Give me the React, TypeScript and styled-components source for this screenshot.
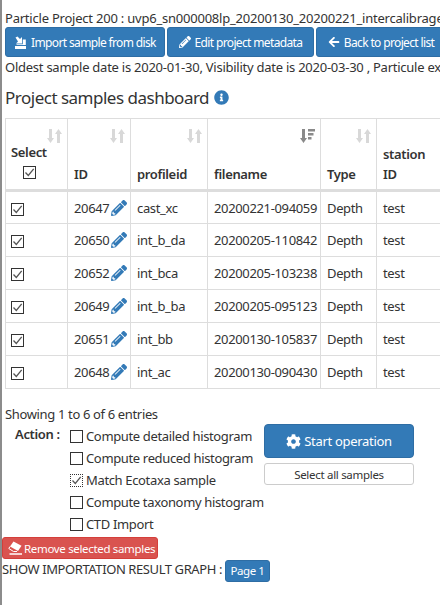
import React from 'react';
import styled, { createGlobalStyle } from 'styled-components';
import { FaArrowLeft, FaCog, FaInfoCircle, FaPencilAlt } from 'react-icons/fa';

const GlobalStyle = createGlobalStyle`
  html, body {
    margin: 0;
    padding: 0;
    background: #fff;
  }

  body {
    font-family: "Noto Sans", "Open Sans", sans-serif;
    font-size: 13px;
    letter-spacing: -0.35px;
    color: #333;
  }

  svg {
    flex: none;
  }
`;

const Page = styled.div`
  position: relative;
  width: 440px;
  height: 605px;
  overflow: hidden;
  border-left: 2px solid #8c8c8c;
  box-sizing: border-box;
`;

const Corner = styled.div`
  position: absolute;
  left: -2px;
  top: 0;
  width: 2px;
  height: 10px;
  background: #222;
`;

const Content = styled.div`
  padding: 9px 0 0 3px;
`;

const Line = styled.div<{ $ls: number; $mt?: number }>`
  height: 18px;
  margin-top: ${p => p.$mt || 0}px;
  line-height: 18px;
  letter-spacing: ${p => p.$ls}px;
  white-space: nowrap;
`;

const Toolbar = styled.div`
  display: flex;
  gap: 2px;
  height: 30px;
  white-space: nowrap;
`;

const ToolButton = styled.button<{ $w: number; $mr?: number }>`
  flex: none;
  display: flex;
  align-items: center;
  justify-content: center;
  gap: 4px;
  width: ${p => p.$w}px;
  margin-right: ${p => p.$mr || 0}px;
  padding: 0;
  border: 1px solid #2e6da4;
  border-radius: 3px;
  background: #337ab7;
  color: #fff;
  font: inherit;
  font-size: 12px;
  letter-spacing: -0.64px;
`;

const Heading = styled.h2`
  display: flex;
  align-items: center;
  gap: 5px;
  height: 26px;
  margin: 8px 0 8px;
  font-size: 17px;
  font-weight: 400;
  letter-spacing: -0.5px;
  color: #333;

  svg {
    color: #337ab7;
  }
`;

const Table = styled.table`
  border-collapse: collapse;
  table-layout: fixed;
  width: 499px;
`;

const HeadCell = styled.th<{ $w: number }>`
  position: relative;
  width: ${p => p.$w}px;
  height: 72px;
  box-sizing: border-box;
  padding: 0 6px 5px;
  border: 1px solid #ddd;
  border-bottom: 3px solid #ddd;
  vertical-align: bottom;
  text-align: left;
  font-weight: 600;
  line-height: 20px;
`;

const SelectHead = styled.div`
  margin: 0 0 3px -1px;
`;

const SelectBoxRow = styled.div`
  margin-left: 12px;
  margin-top: 3px;
  line-height: 13px;
  height: 16px;
`;

const SortMark = styled.svg<{ $on?: boolean }>`
  position: absolute;
  top: 10px;
  right: 5px;
  width: 15px;
  height: 14px;
  color: ${p => (p.$on ? '#8a8a8a' : '#d8d8d8')};
`;

const Cell = styled.td`
  height: 33px;
  box-sizing: border-box;
  padding: 0 6px;
  border: 1px solid #ddd;
  white-space: nowrap;
`;

const IdWrap = styled.div`
  display: flex;
  align-items: center;
  gap: 2px;

  svg {
    color: #337ab7;
  }
`;

const Box = styled.span<{ $focus?: boolean; $shift?: number }>`
  display: inline-flex;
  align-items: center;
  justify-content: center;
  flex: none;
  box-sizing: border-box;
  width: 13px;
  height: 13px;
  margin-left: ${p => p.$shift || 0}px;
  border: 1px ${p => (p.$focus ? 'dotted' : 'solid')} #333;
  background: #fff;
  vertical-align: middle;
`;

const Summary = styled.div`
  height: 18px;
  line-height: 18px;
  margin-top: 16px;
`;

const ActionArea = styled.div`
  display: flex;
  margin-left: 10px;
`;

const ActionLabel = styled.div`
  width: 55px;
  flex: none;
  padding-top: 2px;
  font-weight: 600;
  line-height: 18px;
`;

const Options = styled.div`
  width: 194px;
  flex: none;
  padding-top: 2px;
`;

const Option = styled.label`
  display: flex;
  align-items: center;
  gap: 3px;
  height: 22px;
  white-space: nowrap;
`;

const Side = styled.div`
  display: flex;
  flex-direction: column;
  gap: 5px;
  width: 150px;
  padding-top: 1px;
`;

const StartButton = styled.button`
  display: flex;
  align-items: center;
  justify-content: center;
  gap: 3px;
  height: 34px;
  padding: 0;
  border: 1px solid #2e6da4;
  border-radius: 4px;
  background: #337ab7;
  color: #fff;
  font: inherit;
  font-size: 13px;
  letter-spacing: -0.3px;
`;

const SelectAll = styled.button`
  height: 22px;
  padding: 0;
  border: 1px solid #ccc;
  border-radius: 3px;
  background: #fff;
  color: #333;
  font: inherit;
  font-size: 11.5px;
  letter-spacing: -0.3px;
`;

const Footer = styled.div`
  margin-left: -3px;
`;

const RemoveButton = styled.button`
  display: flex;
  align-items: center;
  gap: 1px;
  width: 156px;
  height: 22px;
  margin-top: 2px;
  padding: 0 0 0 5px;
  border: 1px solid #d43f3a;
  border-radius: 3px;
  background: #d9534f;
  color: #fff;
  font: inherit;
  font-size: 11.5px;
  letter-spacing: -0.33px;
  white-space: nowrap;
`;

const GraphRow = styled.div`
  display: flex;
  align-items: flex-start;
  gap: 3px;
  white-space: nowrap;
  line-height: 20px;
  letter-spacing: -0.41px;
`;

const PageButton = styled.button`
  width: 45px;
  height: 22px;
  margin-top: 1px;
  padding: 0;
  border: 1px solid #2e6da4;
  border-radius: 3px;
  background: #337ab7;
  color: #fff;
  font: inherit;
  font-size: 11.5px;
  letter-spacing: -0.4px;
`;

const Tick = () => (
  <svg width="11" height="11" viewBox="0 0 11 11" fill="none">
    <path d="M1.5 5.5 L4.3 8.5 L9.7 1.8" stroke="#555" strokeWidth="1.3" />
  </svg>
);

const Sort = ({ on }: { on?: boolean }) => (
  <SortMark $on={on} viewBox="0 0 15 14" fill="currentColor">
    <path d="M2 0h3v9h2l-3.5 5L0 9h2z" />
    {on ? (
      <path d="M8 0h7v2.500H8zM8 4h5.500v2.500H8zM8 8h3.500v2.500H8z" />
    ) : (
      <path d="M10 14h3V5h2l-3.500-5L8 5h2z" />
    )}
  </SortMark>
);

const ImportIcon = () => (
  <svg width="13" height="13" viewBox="0 0 13 13" fill="#fff">
    <path d="M1 10h11v3H1z" />
    <path d="M1.500 1.500 L3.500 0.500 L6 3 L8 1 L8 7.500 L2 7.500 L4 5.500 Z" />
    <path d="M8.800 3.500h3v5.500H2.500V8.200h6.300z" />
  </svg>
);

const EraserIcon = () => (
  <svg width="15" height="14" viewBox="0 0 15 14" fill="none">
    <path d="M5.500 0.500 L13.500 4.800 L10 10 L2 5.500 Z" fill="#fff" />
    <path d="M1.500 13 H14" stroke="#fff" strokeWidth="1.500" />
    <path d="M2 5.500 L0.800 7.500 L5.500 10.500 H9" stroke="#fff" strokeWidth="1" />
  </svg>
);

const rows = [
  ['20647', 'cast_xc', '20200221-094059'],
  ['20650', 'int_b_da', '20200205-110842'],
  ['20652', 'int_bca', '20200205-103238'],
  ['20649', 'int_b_ba', '20200205-095123'],
  ['20651', 'int_bb', '20200130-105837'],
  ['20648', 'int_ac', '20200130-090430'],
];

const actions = [
  'Compute detailed histogram',
  'Compute reduced histogram',
  'Match Ecotaxa sample',
  'Compute taxonomy histogram',
  'CTD Import',
];

export default function App() {
  return (
    <>
      <GlobalStyle />
      <Page>
        <Corner />
        <Content>
          <Line $ls={-0.22}>Particle Project 200 : uvp6_sn000008lp_20200130_20200221_intercalibrage</Line>
          <Toolbar>
            <ToolButton $w={160}>
              <ImportIcon /> Import sample from disk
            </ToolButton>
            <ToolButton $w={147}>
              <FaPencilAlt size={12} /> Edit project metadata
            </ToolButton>
            <ToolButton $w={130} $mr={-10}>
              <FaArrowLeft size={12} /> Back to project list
            </ToolButton>
          </Toolbar>
          <Line $ls={-0.25} $mt={1}>
            Oldest sample date is 2020-01-30, Visibility date is 2020-03-30 , Particule export
          </Line>
          <Heading>
            Project samples dashboard <FaInfoCircle size={15} />
          </Heading>
          <Table>
            <thead>
              <tr>
                <HeadCell $w={62}>
                  <Sort />
                  <SelectHead>
                    Select
                    <SelectBoxRow>
                      <Box>
                        <Tick />
                      </Box>
                    </SelectBoxRow>
                  </SelectHead>
                </HeadCell>
                <HeadCell $w={63}>
                  <Sort />
                  ID
                </HeadCell>
                <HeadCell $w={77}>
                  <Sort />
                  profileid
                </HeadCell>
                <HeadCell $w={113}>
                  <Sort on />
                  filename
                </HeadCell>
                <HeadCell $w={56}>
                  <Sort />
                  Type
                </HeadCell>
                <HeadCell $w={128}>
                  <Sort />
                  station
                  <br />
                  ID
                </HeadCell>
              </tr>
            </thead>
            <tbody>
              {rows.map(r => (
                <tr key={r[0]}>
                  <Cell>
                    <Box $shift={-1}>
                      <Tick />
                    </Box>
                  </Cell>
                  <Cell>
                    <IdWrap>
                      {r[0]}
                      <FaPencilAlt size={16} />
                    </IdWrap>
                  </Cell>
                  <Cell>{r[1]}</Cell>
                  <Cell>{r[2]}</Cell>
                  <Cell>Depth</Cell>
                  <Cell>test</Cell>
                </tr>
              ))}
            </tbody>
          </Table>
          <Summary>Showing 1 to 6 of 6 entries</Summary>
          <ActionArea>
            <ActionLabel>Action :</ActionLabel>
            <Options>
              {actions.map((a, i) => (
                <Option key={a}>
                  <Box $focus={i === 2}>{i === 2 && <Tick />}</Box>
                  {a}
                </Option>
              ))}
            </Options>
            <Side>
              <StartButton>
                <FaCog size={15} /> Start operation
              </StartButton>
              <SelectAll>Select all samples</SelectAll>
            </Side>
          </ActionArea>
          <Footer>
            <RemoveButton>
              <EraserIcon /> Remove selected samples
            </RemoveButton>
            <GraphRow>
              SHOW IMPORTATION RESULT GRAPH :<PageButton>Page 1</PageButton>
            </GraphRow>
          </Footer>
        </Content>
      </Page>
    </>
  );
}
